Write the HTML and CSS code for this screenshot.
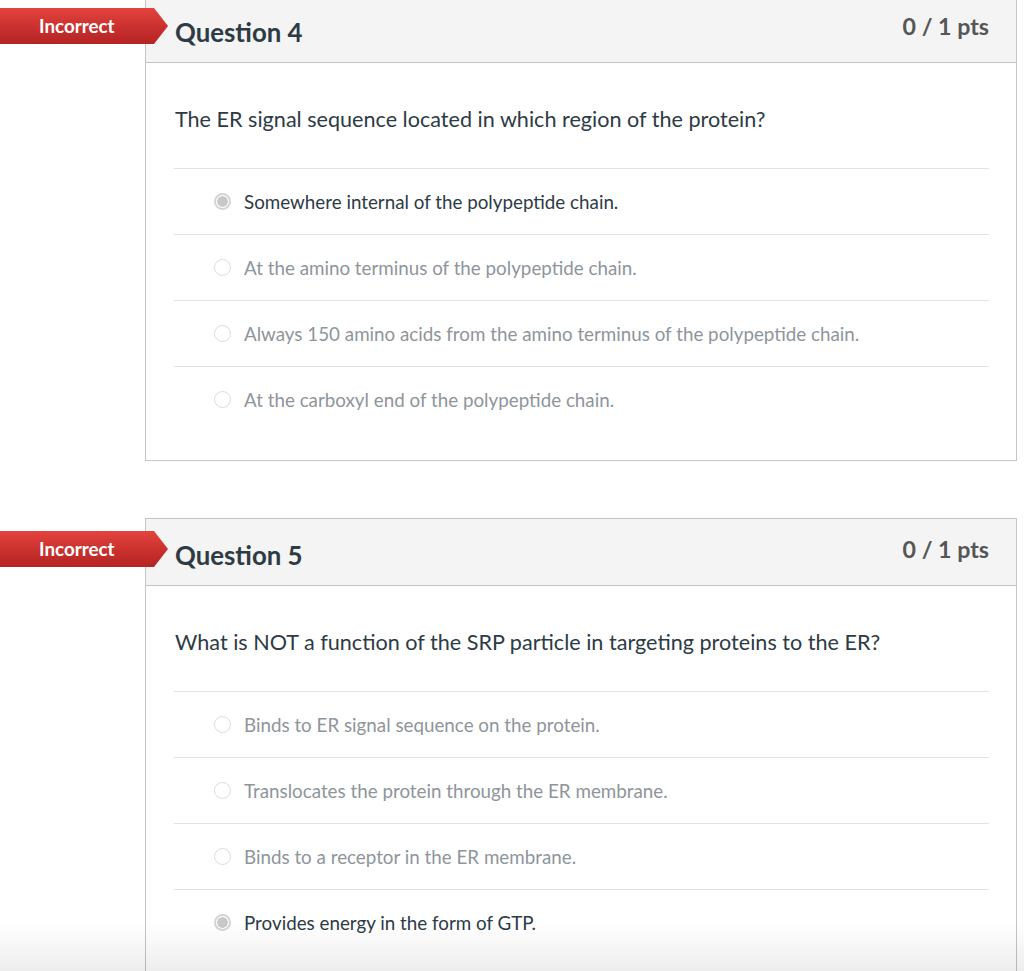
FILE: index.html
```html
<!DOCTYPE html>
<html lang="en">
<head>
<meta charset="utf-8">
<title>Quiz results</title>
<link rel="stylesheet" href="styles.css">
</head>
<body>
<main class="quiz">
  <section class="question">
    <div class="badge">Incorrect</div>
    <header class="q-header">
      <h2 class="q-title">Question 4</h2>
      <div class="q-points">0 / 1 pts</div>
    </header>
    <div class="q-body">
      <p class="q-text">The ER signal sequence located in which region of the protein?</p>
      <ul class="answers">
        <li class="answer selected"><span class="radio"></span><span>Somewhere internal of the polypeptide chain.</span></li>
        <li class="answer"><span class="radio"></span><span>At the amino terminus of the polypeptide chain.</span></li>
        <li class="answer"><span class="radio"></span><span>Always 150 amino acids from the amino terminus of the polypeptide chain.</span></li>
        <li class="answer"><span class="radio"></span><span>At the carboxyl end of the polypeptide chain.</span></li>
      </ul>
    </div>
  </section>

  <section class="question">
    <div class="badge">Incorrect</div>
    <header class="q-header">
      <h2 class="q-title">Question 5</h2>
      <div class="q-points">0 / 1 pts</div>
    </header>
    <div class="q-body">
      <p class="q-text">What is NOT a function of the SRP particle in targeting proteins to the ER?</p>
      <ul class="answers">
        <li class="answer"><span class="radio"></span><span>Binds to ER signal sequence on the protein.</span></li>
        <li class="answer"><span class="radio"></span><span>Translocates the protein through the ER membrane.</span></li>
        <li class="answer"><span class="radio"></span><span>Binds to a receptor in the ER membrane.</span></li>
        <li class="answer selected"><span class="radio"></span><span>Provides energy in the form of GTP.</span></li>
      </ul>
    </div>
  </section>
</main>
<div class="bottom-fade"></div>
</body>
</html>
```

FILE: styles.css
```css
* { box-sizing: border-box; }

html, body {
  margin: 0;
  padding: 0;
  background: #ffffff;
}

body {
  font-family: Lato, "Open Sans", "Liberation Sans", sans-serif;
  color: #2d3b45;
  overflow: hidden;
}

.quiz {
  display: flex;
  flex-direction: column;
  gap: 57px;
  margin-top: -5px;
  margin-left: 145px;
  width: 872px;
}

.question {
  position: relative;
  border: 1px solid #c4c4c4;
  background: #ffffff;
}

.badge {
  position: absolute;
  left: -146px;
  top: 12px;
  width: 168px;
  height: 36px;
  padding-left: 39px;
  font-size: 18.8px;
  font-weight: 700;
  line-height: 36px;
  color: #ffffff;
  background: linear-gradient(#e4433f, #c9302d 55%, #b42424);
  clip-path: polygon(0 0, 154px 0, 168px 50%, 154px 100%, 0 100%);
  z-index: 2;
}

.q-header {
  display: flex;
  justify-content: space-between;
  align-items: flex-start;
  height: 67px;
  padding: 0 27px 0 29px;
  background: #f4f4f4;
  border-bottom: 1px solid #c4c4c4;
}

.q-title {
  margin: 0;
  padding-top: 20px;
  font-size: 25.8px;
  line-height: 32px;
  font-weight: 700;
  color: #2d3b45;
}

.q-points {
  padding-top: 15px;
  font-size: 23.2px;
  line-height: 30px;
  font-weight: 700;
  color: #565656;
}

.q-body {
  padding: 41px 27px 28px 28px;
}

.q-text {
  margin: 0 0 33px 1px;
  font-size: 21.6px;
  line-height: 31px;
  color: #2d3b45;
}

.answers {
  list-style: none;
  margin: 0;
  padding: 0;
}

.answer {
  display: flex;
  align-items: center;
  gap: 13px;
  height: 66px;
  padding-left: 40px;
  border-top: 1px solid #e3e3e3;
  font-size: 18.8px;
  color: #8e959b;
}

.answer.selected {
  color: #2d3b45;
}

.radio {
  flex: none;
  width: 17px;
  height: 17px;
  border-radius: 50%;
  border: 1px solid #dcdcdc;
  background: #ffffff;
}

.answer.selected .radio {
  border: 2px solid #d4d4d4;
  background: radial-gradient(circle, #c8c8c8 0 5px, #ffffff 5.5px);
}

.bottom-fade {
  position: fixed;
  left: 0;
  right: 0;
  bottom: 0;
  height: 48px;
  background: linear-gradient(rgba(0,0,0,0), rgba(0,0,0,0.07));
  pointer-events: none;
  z-index: 5;
}
```
